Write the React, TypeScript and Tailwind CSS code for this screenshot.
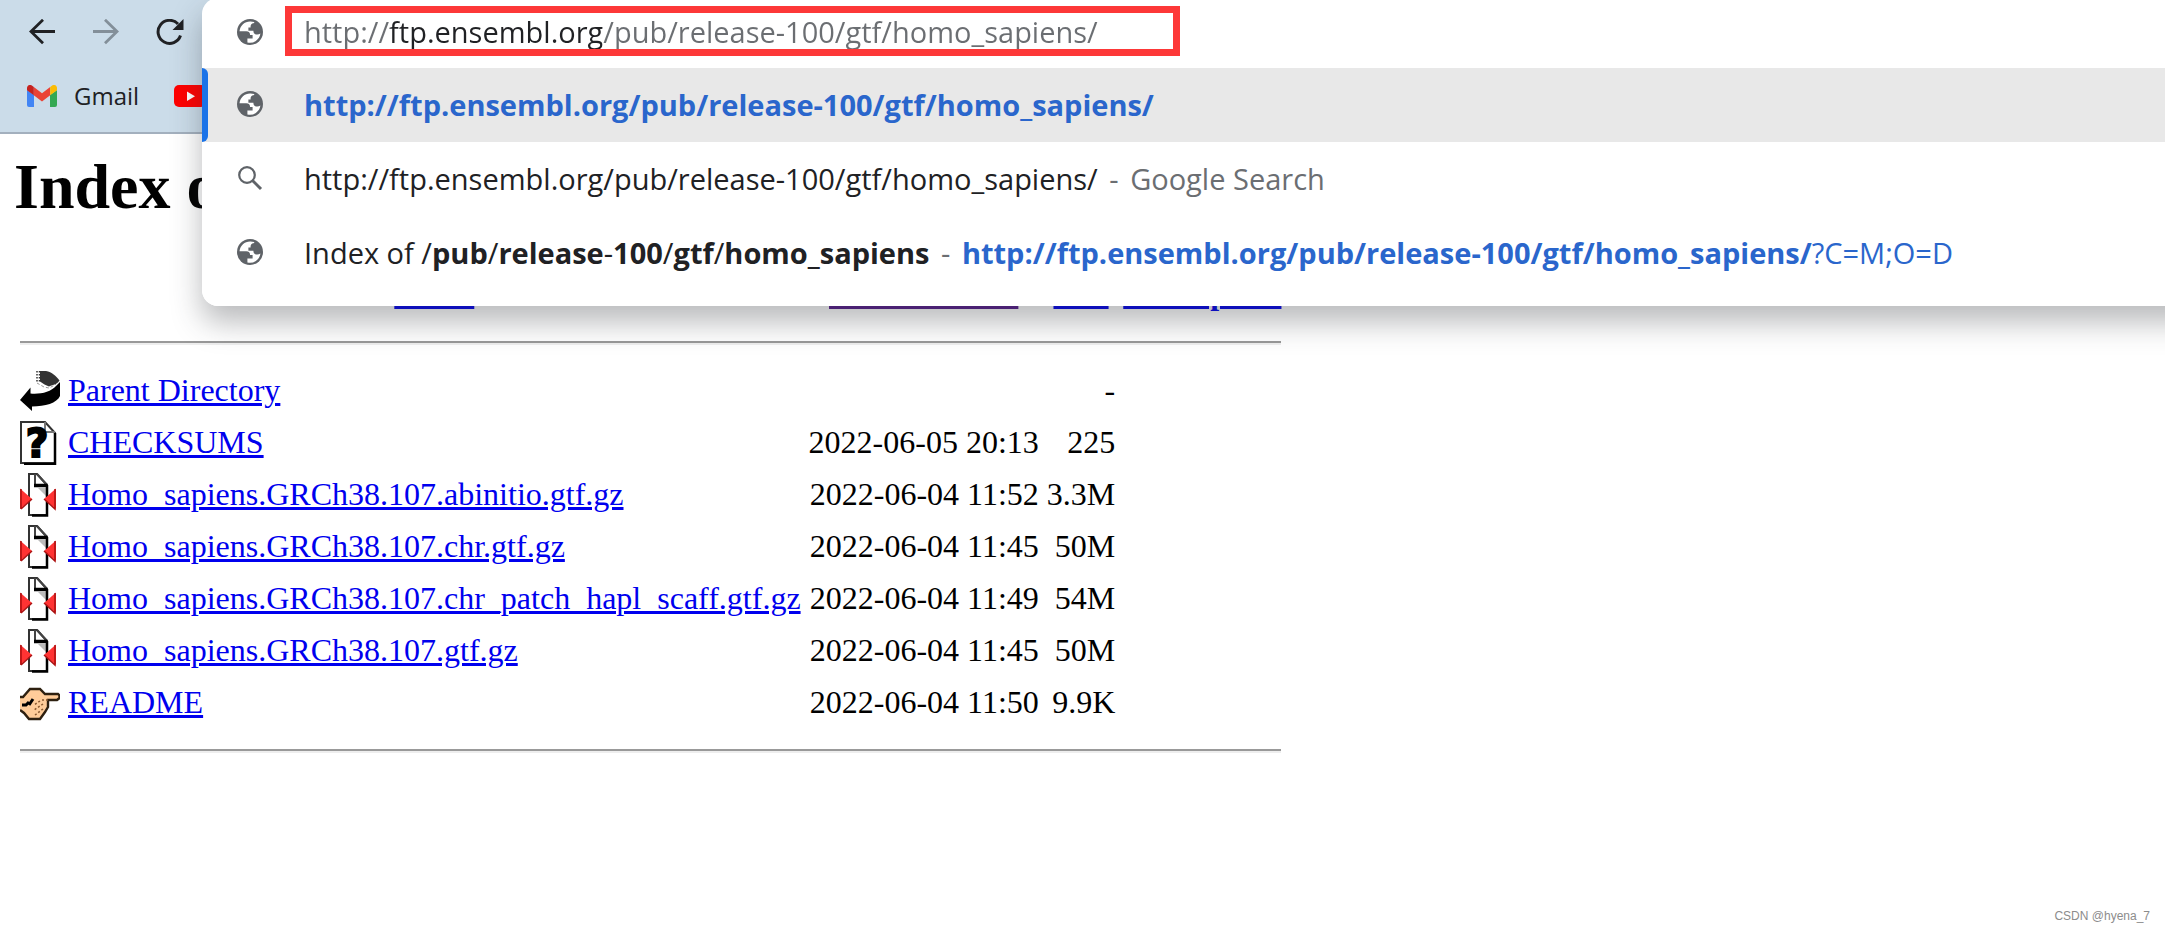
import React, {useState} from "react";

type EntryKind = "parent" | "unknown" | "compressed" | "readme";

interface Entry {
  kind: EntryKind;
  name: string;
  modified: string;
  size: string;
}

const ADDRESS = "http://ftp.ensembl.org/pub/release-100/gtf/homo_sapiens/";

const ENTRIES: Entry[] = [
  {kind: "parent", name: "Parent Directory", modified: "", size: "-"},
  {kind: "unknown", name: "CHECKSUMS", modified: "2022-06-05 20:13", size: "225"},
  {kind: "compressed", name: "Homo_sapiens.GRCh38.107.abinitio.gtf.gz", modified: "2022-06-04 11:52", size: "3.3M"},
  {kind: "compressed", name: "Homo_sapiens.GRCh38.107.chr.gtf.gz", modified: "2022-06-04 11:45", size: "50M"},
  {kind: "compressed", name: "Homo_sapiens.GRCh38.107.chr_patch_hapl_scaff.gtf.gz", modified: "2022-06-04 11:49", size: "54M"},
  {kind: "compressed", name: "Homo_sapiens.GRCh38.107.gtf.gz", modified: "2022-06-04 11:45", size: "50M"},
  {kind: "readme", name: "README", modified: "2022-06-04 11:50", size: "9.9K"},
];

const GlobeIcon = () => (
  <svg viewBox="0 0 26 26" className="size-[26px] shrink-0 text-[#5f6368]" aria-hidden="true">
    <circle cx="13" cy="13" r="13" fill="currentColor"/>
    <path
      fill="#fff"
      d="M13 2.400c-5.400 0-9.900 4-10.500 9.800h6.700c2.800 0 3.900 1.300 3.900 3.900h2.500v3.300h-5.200v4.000a10.600 10.600 0 0 0 13-8.800c-.9.600-2 1-3.200 1-2.500 0-3.800-1.400-3.800-3.900h-5V8.500h2.200c0-2.600.4-4 3.600-4.400V3.100a10.600 10.600 0 0 0-3.900-.7z"
    />
  </svg>
);

const SearchIcon = () => (
  <svg viewBox="0 0 26 26" className="size-[26px] shrink-0" fill="none" stroke="#5f6368" aria-hidden="true">
    <circle cx="10" cy="10" r="7.8" strokeWidth="2.2"/>
    <path d="M15.500 15.500l8.500 8.500" strokeWidth="3"/>
  </svg>
);

const GmailIcon = () => (
  <svg viewBox="0 0 30 22" className="h-[22px] w-[30px]" aria-hidden="true">
    <path fill="#4285f4" d="M0 5l7 5v12H2a2 2 0 0 1-2-2z"/>
    <path fill="#34a853" d="M30 5l-7 5v12h5a2 2 0 0 0 2-2z"/>
    <path fill="#ea4335" d="M6.800 2L15 8.300 23.200 2v8.200L15 16.500 6.800 10.200z"/>
    <path fill="#c5221f" d="M0 3c0-2.600 3-4 5.200-2.300L6.800 2v8.200L0 5.200z"/>
    <path fill="#fbbc04" d="M30 3c0-2.600-3-4-5.200-2.300L23.200 2v8.200L30 5.200z"/>
  </svg>
);

const YoutubeIcon = () => (
  <svg viewBox="0 0 32 22" className="h-[22px] w-8" aria-hidden="true">
    <rect width="32" height="22" rx="5" fill="#f00"/>
    <path fill="#fff" d="M13 6.500v9.500l8-4.750z"/>
  </svg>
);

const EntryIcon: React.FC<{kind: EntryKind}> = ({kind}) => (
  <svg viewBox="0 0 40 44" className="block h-11 w-10" aria-hidden="true">
    {kind === "parent" && (
      <>
        <path fill="#333" d="M20 2h6c6 1 10 5 13.500 9.500-2 4-6 4-10.500 6-3-1-6-3-9-5z"/>
        <path d="M17 2v12M19.500 2v12" stroke="#333" strokeWidth="1.500" strokeDasharray="1.500 1.500"/>
        <path d="M17 14l7 4 5 1 6-3 4-4" fill="none" stroke="#999" strokeDasharray="3 2"/>
        <path d="M0 31l10.500-12.500v6C20 25.500 31 23 36 17l4-4v14c-3 7-15 10.500-28 10.500V42z"/>
      </>
    )}
    {kind === "unknown" && (
      <>
        <path d="M1 1h24l10 11v30H1z" fill="#fff" stroke="#333" strokeWidth="2"/>
        <path d="M25 1v10h10" fill="none" stroke="#777" strokeWidth="2"/>
        <path d="M35 12v31H4" fill="none" stroke="#000" strokeWidth="2.500"/>
        <text
          x="17"
          y="36"
          textAnchor="middle"
          fontFamily="DejaVu Sans, sans-serif"
          fontWeight="bold"
          fontSize="39"
          stroke="#000"
          strokeWidth="2"
        >
          ?
        </text>
      </>
    )}
    {kind === "compressed" && (
      <>
        <path d="M9 1h8l10 11v30H9z" fill="#fff" stroke="#333" strokeWidth="2"/>
        <path d="M18 15h9v9z" fill="#bbb"/>
        <path d="M15 1v12M17 1l10 11" fill="none" stroke="#444" strokeWidth="2"/>
        <path d="M14 12.500h13.500" stroke="#000" strokeWidth="3.500"/>
        <path d="M27 12v30.500H12" fill="none" stroke="#000" strokeWidth="2.500"/>
        <path d="M0 15.500L12 26 0 36z" fill="#f33"/>
        <path d="M1 16v20M1 36L12 26" fill="none" stroke="#a11" strokeWidth="1.500"/>
        <path d="M36 15.500L24 26l12 10z" fill="#f33"/>
        <path d="M35 16v20L24 26" fill="none" stroke="#a11" strokeWidth="1.500"/>
      </>
    )}
    {kind === "readme" && (
      <>
        <path d="M0 16h3l7-8h10l5 5h13l2 2v2l-3 2H28v7l-3 5-5 8H9l-6-7-3-4z" fill="#fc9"/>
        <path
          d="M0 16h3l7-8h10l5 5h13l1.500 1.500v2.500l-2.500 2H28v7l-3 5-5 7H9l-5-6-4-3"
          fill="none"
          stroke="#2e2010"
          strokeWidth="2.400"
        />
        <path d="M2 24h4l3-3M9 24l4-6" fill="none" stroke="#000" strokeWidth="3"/>
        <path d="M22 19h7M20 20l-6 4M23 23l-9 6M23 28l-8 6" stroke="#8a5a30" strokeWidth="1.500" strokeDasharray="2 2"/>
      </>
    )}
  </svg>
);

const Toolbar = () => (
  <header className="border-b-2 border-[#a3b0be] bg-[#cbdce9] text-[#202124]">
    <nav className="flex h-16 items-center gap-7 pl-6" aria-label="Navigation">
      <button type="button" aria-label="Back" className="flex size-9 items-center justify-center">
        <svg viewBox="0 0 26 26" className="size-[26px]" fill="none" stroke="currentColor" strokeWidth="2.800">
          <path d="M26 12.500H2M14 .8L2 12.500 14 24.200"/>
        </svg>
      </button>
      <button type="button" aria-label="Forward" disabled className="flex size-9 items-center justify-center text-[#838f99]">
        <svg viewBox="0 0 26 26" className="size-[26px]" fill="none" stroke="currentColor" strokeWidth="2.800">
          <path d="M0 12.500h24M12 .8l12 11.700-12 11.700"/>
        </svg>
      </button>
      <button type="button" aria-label="Reload" className="flex size-9 items-center justify-center">
        <svg viewBox="0 0 28 26" className="h-[26px] w-7">
          <path d="M24.500 16.500A11.500 11.500 0 1 1 22 5" fill="none" stroke="currentColor" strokeWidth="3"/>
          <path d="M27.500 0v11H16.500z" fill="currentColor"/>
        </svg>
      </button>
    </nav>
    <div className="flex h-17 items-center pb-1 pl-[27px] font-['Open_Sans',sans-serif] text-2xl">
      <a href="#gmail" className="flex items-center gap-[17px]">
        <GmailIcon/>
        <span>Gmail</span>
      </a>
      <a href="#youtube" aria-label="YouTube" className="ml-[35px]">
        <YoutubeIcon/>
      </a>
    </div>
  </header>
);

interface SuggestionProps {
  icon: React.ReactNode;
  selected?: boolean;
  children: React.ReactNode;
}

const Suggestion: React.FC<SuggestionProps> = ({icon, selected = false, children}) => (
  <li className={selected ? "relative bg-[#e8e8e8]" : "relative"}>
    {selected && <span className="absolute inset-y-0 left-0 w-1.5 rounded-r-md bg-[#1a73e8]"/>}
    <a href="#suggestion" className="flex h-[74px] items-center gap-[41px] pl-[35px] whitespace-pre">
      <span className="pb-0.5">{icon}</span>
      <span>{children}</span>
    </a>
  </li>
);

const Omnibox = () => {
  const [value, setValue] = useState(ADDRESS);

  return (
    <div className="absolute -top-0.5 right-0 left-[202px] overflow-clip rounded-l-2xl bg-white pt-0.5 pb-4 font-['Open_Sans',sans-serif] text-[29px] text-[#202124]">
      <div className="relative flex h-17 items-center gap-[41px] pb-1 pl-[35px]">
        <GlobeIcon/>
        {/* the host name is darker than the rest of the address */}
        <input
          type="text"
          aria-label="Address"
          value={value}
          onChange={(e) => setValue(e.target.value)}
          className="flex-1 bg-[linear-gradient(90deg,#6b6e72_0_85px,#202124_85px_298px,#6b6e72_298px)] bg-clip-text text-transparent caret-black outline-none"
        />
        <div className="pointer-events-none absolute top-1.5 left-[83px] h-[50px] w-[895px] border-7 border-[#fd3838]"/>
      </div>
      <ul>
        <Suggestion icon={<GlobeIcon/>} selected>
          <b className="text-[#2a66cc]">{ADDRESS}</b>
        </Suggestion>
        <Suggestion icon={<SearchIcon/>}>
          {ADDRESS}
          <span className="px-1 text-[#6b6e72]"> - </span>
          <span className="text-[#6b6e72]">Google Search</span>
        </Suggestion>
        <Suggestion icon={<GlobeIcon/>}>
          Index of /<b>pub</b>/<b>release</b>-<b>100</b>/<b>gtf</b>/<b>homo_sapiens</b>
          <span className="px-1 text-[#6b6e72]"> - </span>
          <span className="text-[#2a66cc]"><b>{ADDRESS}</b>?C=M;O=D</span>
        </Suggestion>
      </ul>
    </div>
  );
};

const Rule = () => (
  <tr>
    <td colSpan={5} className="p-0.5">
      <hr className="my-4 h-1 border-t-2 border-b-2 border-t-[#999] border-b-[#eee]"/>
    </td>
  </tr>
);

const Listing = () => (
  <main className="px-3.5 pt-[17px] font-['Liberation_Serif',serif] text-black">
    <h1 className="mb-11 text-[64px] leading-[72px] font-bold">Index of</h1>
    <table className="border-separate border-spacing-1 text-[32px] leading-9 whitespace-nowrap">
      <thead>
        <tr>
          <th className="px-0.5 pb-1"><div className="h-11 w-10"/></th>
          <th className="px-0.5 pb-1">
            <a href="#name" className="text-[#0000ee] underline decoration-3 underline-offset-2">Name</a>
          </th>
          <th className="px-0.5 pb-1">
            <a href="#modified" className="text-[#551a8b] underline decoration-3 underline-offset-2">Last modified</a>
          </th>
          <th className="px-0.5 pb-1">
            <a href="#size" className="text-[#0000ee] underline decoration-3 underline-offset-2">Size</a>
          </th>
          <th className="px-0.5 pb-1">
            <a href="#description" className="text-[#0000ee] underline decoration-3 underline-offset-2">Description</a>
          </th>
        </tr>
      </thead>
      <tbody>
        <Rule/>
        {ENTRIES.map((entry) => (
          <tr key={entry.name}>
            <td className="p-0.5"><EntryIcon kind={entry.kind}/></td>
            <td className="px-0.5 pb-0.5">
              <a href="#entry" className="text-[#0000ee] underline decoration-3 underline-offset-2">{entry.name}</a>
            </td>
            <td className="px-0.5 pb-0.5 text-right">{entry.modified}</td>
            <td className="px-0.5 pb-0.5 text-right">{entry.size}</td>
            <td/>
          </tr>
        ))}
        <Rule/>
      </tbody>
    </table>
  </main>
);

export default function App() {
  return (
    <div className="relative flex min-h-screen flex-col overflow-hidden bg-white">
      <Toolbar/>
      <Listing/>
      {/* drop shadow of the popup, runs past the right edge of the window */}
      <div className="absolute -top-0.5 -right-12 left-[202px] h-[308px] rounded-l-2xl shadow-[0_16px_30px_rgba(50,54,60,0.34)]"/>
      <Omnibox/>
      <footer className="mt-auto pr-[15px] pb-2 text-right font-['Liberation_Sans',sans-serif] text-xs text-[#8c8c8c]">
        CSDN @hyena_7
      </footer>
    </div>
  );
}
